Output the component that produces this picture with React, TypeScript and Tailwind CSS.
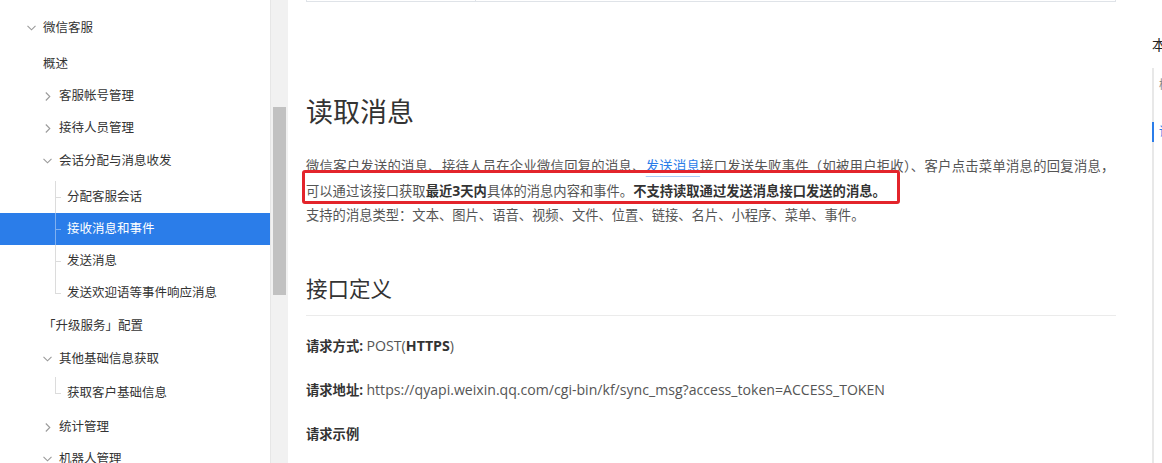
import React from "react";

const Down = () => (
  <svg width="9" height="6" viewBox="0 0 9 6" className="shrink-0">
    <polyline points="0.5,0.8 4.5,4.8 8.5,0.8" fill="none" stroke="#9a9a9a" strokeWidth="1.1" />
  </svg>
);
const Right = () => (
  <svg width="6" height="9" viewBox="0 0 6 9" className="shrink-0">
    <polyline points="0.8,0.5 4.8,4.5 0.8,8.5" fill="none" stroke="#9a9a9a" strokeWidth="1.1" />
  </svg>
);

function Child({ label, active, last }: { label: string; active?: boolean; last?: boolean }) {
  return (
    <div className={`flex h-8 items-stretch ${active ? "bg-[#2b7de9] text-white" : "text-[#333]"}`}>
      <div className="w-[55px] shrink-0" />
      <div className="flex w-[6px] shrink-0 flex-col">
        <div className={`flex-1 border-b border-l ${active ? "border-[#7fb0f0]" : "border-[#dcdcdc]"}`} />
        <div className={`flex-1 ${last ? "" : active ? "border-l border-[#7fb0f0]" : "border-l border-[#dcdcdc]"}`} />
      </div>
      <div className="ml-[6px] flex items-center whitespace-nowrap">{label}</div>
    </div>
  );
}

function Sidebar() {
  return (
    <div className="w-[270px] shrink-0 bg-white pt-[12px] text-[12.5px] text-[#333]">
      <div className="flex h-8 items-center pl-[27px]">
        <Down />
        <span className="ml-[7px]">微信客服</span>
      </div>
      <div className="mt-[4px] flex h-8 items-center pl-[43px]">概述</div>
      <div className="flex h-8 items-center pl-[45px]">
        <Right />
        <span className="ml-[8px]">客服帐号管理</span>
      </div>
      <div className="flex h-8 items-center pl-[45px]">
        <Right />
        <span className="ml-[8px]">接待人员管理</span>
      </div>
      <div className="mt-[1px] flex h-8 items-center pl-[43px]">
        <Down />
        <span className="ml-[7px]">会话分配与消息收发</span>
      </div>
      <div className="mt-[4px]">
        <Child label="分配客服会话" />
        <Child label="接收消息和事件" active />
        <Child label="发送消息" />
        <Child label="发送欢迎语等事件响应消息" last />
      </div>
      <div className="mt-[1px] flex h-8 items-center pl-[43px]">「升级服务」配置</div>
      <div className="mt-[1px] flex h-8 items-center pl-[43px]">
        <Down />
        <span className="ml-[7px]">其他基础信息获取</span>
      </div>
      <div className="mt-[2px]">
        <Child label="获取客户基础信息" last />
      </div>
      <div className="mt-[2px] flex h-8 items-center pl-[45px]">
        <Right />
        <span className="ml-[8px]">统计管理</span>
      </div>
      <div className="flex h-8 items-center pl-[43px]">
        <Down />
        <span className="ml-[7px]">机器人管理</span>
      </div>
    </div>
  );
}

function Scrollbar() {
  return (
    <div className="flex w-[18px] shrink-0 flex-col items-center border-l border-[#e6e6e6] bg-[#f1f1f1]">
      <div className="mt-[107px] h-[188px] w-[13px] shrink-0 bg-[#c1c1c1]" />
    </div>
  );
}

function Content() {
  return (
    <div className="relative ml-[18px] w-[810px] shrink-0 text-[13.3px] text-[#555]">
      <div className="flex h-[2px] border-x border-b border-[#dfe3e8]">
        <div className="w-[169px] border-r border-[#dfe3e8]" />
      </div>
      <h1 className="mt-[90px] text-[27px] leading-[40px] font-normal text-[#333]">读取消息</h1>
      <div className="mt-[22px] leading-[24.5px]">
        <div className="w-[808px] text-justify tracking-[-0.4px] whitespace-nowrap [text-align-last:justify]">
          微信客户发送的消息、接待人员在企业微信回复的消息、
          <span className="text-[#2b7de9] underline decoration-[#a8cbf5] underline-offset-[5px]">发送消息</span>
          接口发送失败事件（如被用户拒收）、客户点击菜单消息的回复消息，
        </div>
        <div className="whitespace-nowrap">
          可以通过该接口获取
          <b className="font-bold text-[#333]">
            最近<span className="text-[14px]">3</span>天内
          </b>
          具体的消息内容和事件。
          <b className="font-bold text-[#333]">不支持读取通过发送消息接口发送的消息。</b>
        </div>
        <div className="whitespace-nowrap">
          支持的消息类型：文本、图片、语音、视频、文件、位置、链接、名片、小程序、菜单、事件。
        </div>
      </div>
      <h2 className="mt-[45px] border-b border-[#ebebeb] pb-[10px] text-[21.5px] leading-[32px] font-normal text-[#333]">
        接口定义
      </h2>
      <p className="mt-[18px] leading-[24px]">
        <b className="font-bold text-[#333]">请求方式:</b>{" "}
        <span className="text-[14.2px]">
          POST(<b className="font-bold text-[#333]">HTTPS</b>)
        </span>
      </p>
      <p className="mt-[20px] leading-[24px]">
        <b className="font-bold text-[#333]">请求地址:</b>{" "}
        <span className="text-[14.1px]">https://qyapi.weixin.qq.com/cgi-bin/kf/sync_msg?access_token=ACCESS_TOKEN</span>
      </p>
      <p className="mt-[20px] leading-[24px]">
        <b className="font-bold text-[#333]">请求示例</b>
      </p>
      <div className="absolute left-[-4px] top-[170px] h-[34px] w-[598px] rounded-[3px] border-[3px] border-[#e3242b]" />
    </div>
  );
}

function Toc() {
  return (
    <div className="ml-[36px] flex w-[200px] shrink-0 flex-col text-[12.5px]">
      <div className="mt-[35px] text-[14px] leading-[20px] whitespace-nowrap text-[#222]">本页目录</div>
      <div className="mt-[13px] flex shrink-0 flex-col border-l-2 border-[#e8e8e8] pt-[4px] pb-[400px]">
        <div className="pl-[5px] leading-[25px] whitespace-nowrap text-[#888]">概述</div>
        <div className="pl-[5px] leading-[25px] whitespace-nowrap text-[#888]">「升级服务」配置</div>
        <div className="-ml-[2px] border-l-2 border-[#2b7de9] pl-[5px] leading-[20px] whitespace-nowrap text-[#2b7de9]">
          读取消息
        </div>
      </div>
    </div>
  );
}

export default function App() {
  return (
    <div className="flex h-[463px] w-[1162px] overflow-hidden bg-white font-['Open_Sans','Noto_Sans_CJK_SC',sans-serif]">
      <Sidebar />
      <Scrollbar />
      <Content />
      <Toc />
    </div>
  );
}
